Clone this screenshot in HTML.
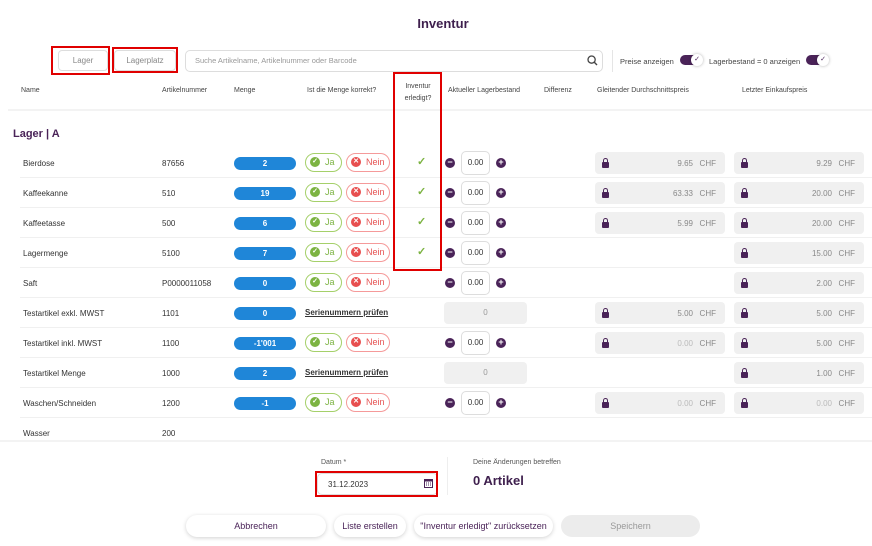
<!DOCTYPE html>
<html><head><meta charset="utf-8"><style>
*{box-sizing:border-box;margin:0;padding:0}
body{width:872px;height:546px;overflow:hidden;background:#fff;font-family:"Liberation Sans",sans-serif;color:#333;position:relative}
.a{position:absolute}
.t{font-size:7.5px;color:#444}
.h{font-size:7px;color:#444}
.row{position:absolute;left:0;width:872px;height:30px}
.row:after{content:"";position:absolute;left:20px;right:0;bottom:0;height:1px;background:#f0f0f0}
.row .nm{position:absolute;left:23px;top:11px;font-size:8px;color:#333}
.row .nr{position:absolute;left:162px;top:11px;font-size:8px;color:#333}
.pill{position:absolute;left:234px;top:9px;width:62px;height:13px;border-radius:7px;background:#1f86d8;color:#fff;font-size:8px;font-weight:bold;text-align:center;line-height:13px}
.ja,.ne{position:absolute;top:5px;height:19px;border-radius:10px;font-size:9px;line-height:17px;padding-left:19px}
.ja{left:305px;width:37px;border:1px solid #a5d06a;color:#7cb342}
.ne{left:346px;width:44px;border:1px solid #f59a9a;color:#e55353}
.ja:before,.ne:before{content:"";position:absolute;left:4px;top:3px;width:10px;height:10px;border-radius:50%}
.ja:before{background:#7cb342}.ne:before{background:#e84e4e}
.ja i,.ne i{position:absolute;left:4px;top:3px;width:10px;height:10px;color:#fff;font-style:normal;font-size:7px;line-height:10px;text-align:center;font-weight:bold}
.ck{position:absolute;left:417px;top:7px;color:#7cb342;font-size:11px;font-weight:bold}
.mi,.pl{position:absolute;top:10px;width:10px;height:10px;border-radius:50%;background:#4a2358;color:#fff;font-size:9px;line-height:9px;text-align:center;font-weight:bold}
.mi{left:445px}.pl{left:496px}
.in{position:absolute;left:461px;top:3px;width:29px;height:24px;border:1px solid #ddd;border-radius:5px;font-size:8px;text-align:center;line-height:22px;color:#333}
.pb{position:absolute;top:4px;width:130px;height:22px;background:#f0f0f0;border-radius:4px;font-size:8px;color:#888}
.pb b{position:absolute;left:7px;top:10px;width:7px;height:6px;background:#4a2358;border-radius:1px}
.pb b:before{content:"";position:absolute;left:1px;top:-4px;width:5px;height:5px;border:1px solid #4a2358;border-bottom:none;border-radius:3px 3px 0 0;box-sizing:border-box}
.pb span{position:absolute;right:32px;top:7px}
.pb em{position:absolute;right:9px;top:7px;font-style:normal}
.p1{left:595px}.p2{left:734px}
.lt span{color:#bbb}
.sn{position:absolute;left:305px;top:10px;font-size:8px;font-weight:bold;text-decoration:underline;color:#333}
.dis{position:absolute;left:444px;top:4px;width:83px;height:22px;background:#f0f0f0;border-radius:4px;font-size:8px;color:#999;text-align:center;line-height:22px}
.btn{position:absolute;top:515px;height:22px;border-radius:11px;background:#fff;box-shadow:0 1px 4px rgba(0,0,0,.18);font-size:9px;color:#4a2358;text-align:center;line-height:22px}
.red{position:absolute;border:2px solid #e00000}
</style></head><body>
<div class="a" style="left:0;top:16px;width:886px;text-align:center;font-size:13px;font-weight:bold;color:#3e1f4d">Inventur</div>

<div class="a" style="left:58px;top:50px;width:50px;height:21px;border:1px solid #ddd;border-radius:4px;font-size:8px;color:#888;text-align:center;line-height:19px">Lager</div>
<div class="a" style="left:114px;top:50px;width:62px;height:21px;border:1px solid #ddd;border-radius:4px;font-size:8px;color:#888;text-align:center;line-height:19px">Lagerplatz</div>
<div class="red" style="left:51px;top:46px;width:59px;height:29px"></div>
<div class="red" style="left:112px;top:47px;width:66px;height:26px"></div>
<div class="a" style="left:185px;top:50px;width:418px;height:22px;border:1px solid #ddd;border-radius:5px;font-size:7.5px;color:#999;line-height:20px;padding-left:9px">Suche Artikelname, Artikelnummer oder Barcode</div>
<svg class="a" style="left:587px;top:55px" width="11" height="11" viewBox="0 0 11 11"><circle cx="4.6" cy="4.6" r="3.6" fill="none" stroke="#444" stroke-width="1.3"/><path d="M7.3 7.3L10 10" stroke="#444" stroke-width="1.4"/></svg>
<div class="a" style="left:612px;top:50px;width:1px;height:22px;background:#e5e5e5"></div>
<div class="a t" style="left:620px;top:57px">Preise anzeigen</div>
<div class="a" style="left:680px;top:55px;width:20px;height:10px;border-radius:5px;background:#4a2358"></div>
<div class="a" style="left:691px;top:54px;width:12px;height:12px;border-radius:50%;background:#fff;box-shadow:0 0 3px rgba(0,0,0,.3);font-size:7px;text-align:center;line-height:12px;color:#4a2358">✓</div>
<div class="a t" style="left:709px;top:57px">Lagerbestand = 0 anzeigen</div>
<div class="a" style="left:806px;top:55px;width:20px;height:10px;border-radius:5px;background:#4a2358"></div>
<div class="a" style="left:817px;top:54px;width:12px;height:12px;border-radius:50%;background:#fff;box-shadow:0 0 3px rgba(0,0,0,.3);font-size:7px;text-align:center;line-height:12px;color:#4a2358">✓</div>

<div class="a h" style="left:21px;top:87px">Name</div>
<div class="a h" style="left:162px;top:87px">Artikelnummer</div>
<div class="a h" style="left:234px;top:87px">Menge</div>
<div class="a h" style="left:307px;top:87px">Ist die Menge korrekt?</div>
<div class="a h" style="left:400px;top:81px;width:36px;text-align:center;line-height:12px">Inventur erledigt?</div>
<div class="a h" style="left:448px;top:87px">Aktueller Lagerbestand</div>
<div class="a h" style="left:544px;top:87px">Differenz</div>
<div class="a h" style="left:597px;top:87px">Gleitender Durchschnittspreis</div>
<div class="a h" style="left:742px;top:87px">Letzter Einkaufspreis</div>
<div class="a" style="left:8px;top:109px;width:864px;height:2px;background:#f3f3f3"></div>
<div class="a" style="left:13px;top:128px;font-size:11px;font-weight:bold;color:#4a2358">Lager | A</div>

<div class="row" style="top:148px"><div class="nm">Bierdose</div><div class="nr">87656</div><div class="pill">2</div><div class="ja"><i>✓</i>Ja</div><div class="ne"><i>✕</i>Nein</div><div class="ck">✓</div><div class="mi">−</div><div class="in">0.00</div><div class="pl">+</div><div class="pb p1"><b></b><span>9.65</span><em>CHF</em></div><div class="pb p2"><b></b><span>9.29</span><em>CHF</em></div></div>
<div class="row" style="top:178px"><div class="nm">Kaffeekanne</div><div class="nr">510</div><div class="pill">19</div><div class="ja"><i>✓</i>Ja</div><div class="ne"><i>✕</i>Nein</div><div class="ck">✓</div><div class="mi">−</div><div class="in">0.00</div><div class="pl">+</div><div class="pb p1"><b></b><span>63.33</span><em>CHF</em></div><div class="pb p2"><b></b><span>20.00</span><em>CHF</em></div></div>
<div class="row" style="top:208px"><div class="nm">Kaffeetasse</div><div class="nr">500</div><div class="pill">6</div><div class="ja"><i>✓</i>Ja</div><div class="ne"><i>✕</i>Nein</div><div class="ck">✓</div><div class="mi">−</div><div class="in">0.00</div><div class="pl">+</div><div class="pb p1"><b></b><span>5.99</span><em>CHF</em></div><div class="pb p2"><b></b><span>20.00</span><em>CHF</em></div></div>
<div class="row" style="top:238px"><div class="nm">Lagermenge</div><div class="nr">5100</div><div class="pill">7</div><div class="ja"><i>✓</i>Ja</div><div class="ne"><i>✕</i>Nein</div><div class="ck">✓</div><div class="mi">−</div><div class="in">0.00</div><div class="pl">+</div><div class="pb p2"><b></b><span>15.00</span><em>CHF</em></div></div>
<div class="row" style="top:268px"><div class="nm">Saft</div><div class="nr">P0000011058</div><div class="pill">0</div><div class="ja"><i>✓</i>Ja</div><div class="ne"><i>✕</i>Nein</div><div class="mi">−</div><div class="in">0.00</div><div class="pl">+</div><div class="pb p2"><b></b><span>2.00</span><em>CHF</em></div></div>
<div class="row" style="top:298px"><div class="nm">Testartikel exkl. MWST</div><div class="nr">1101</div><div class="pill">0</div><div class="sn">Serienummern prüfen</div><div class="dis">0</div><div class="pb p1"><b></b><span>5.00</span><em>CHF</em></div><div class="pb p2"><b></b><span>5.00</span><em>CHF</em></div></div>
<div class="row" style="top:328px"><div class="nm">Testartikel inkl. MWST</div><div class="nr">1100</div><div class="pill">-1'001</div><div class="ja"><i>✓</i>Ja</div><div class="ne"><i>✕</i>Nein</div><div class="mi">−</div><div class="in">0.00</div><div class="pl">+</div><div class="pb p1 lt"><b></b><span>0.00</span><em>CHF</em></div><div class="pb p2"><b></b><span>5.00</span><em>CHF</em></div></div>
<div class="row" style="top:358px"><div class="nm">Testartikel Menge</div><div class="nr">1000</div><div class="pill">2</div><div class="sn">Serienummern prüfen</div><div class="dis">0</div><div class="pb p2"><b></b><span>1.00</span><em>CHF</em></div></div>
<div class="row" style="top:388px"><div class="nm">Waschen/Schneiden</div><div class="nr">1200</div><div class="pill">-1</div><div class="ja"><i>✓</i>Ja</div><div class="ne"><i>✕</i>Nein</div><div class="mi">−</div><div class="in">0.00</div><div class="pl">+</div><div class="pb p1 lt"><b></b><span>0.00</span><em>CHF</em></div><div class="pb p2 lt"><b></b><span>0.00</span><em>CHF</em></div></div>
<div class="row" style="top:418px"><div class="nm">Wasser</div><div class="nr">200</div></div>

<div class="a" style="left:0;top:440px;width:872px;height:106px;background:#fff;border-top:2px solid #f3f3f3"></div>
<div class="red" style="left:393px;top:72px;width:49px;height:199px"></div>

<div class="a h" style="left:321px;top:459px;color:#555">Datum *</div>
<div class="a" style="left:317px;top:473px;width:121px;height:22px;border:1px solid #ddd;border-radius:5px;font-size:8px;line-height:22px;padding-left:10px;color:#333">31.12.2023</div>
<svg class="a" style="left:424px;top:478px" width="9" height="10" viewBox="0 0 9 10"><rect x="0.5" y="1.5" width="8" height="8" fill="none" stroke="#4a2358"/><rect x="0.5" y="1.5" width="8" height="2" fill="#4a2358"/><path d="M2 5h1M4 5h1M6 5h1M2 7h1M4 7h1M6 7h1" stroke="#4a2358"/></svg>
<div class="red" style="left:315px;top:471px;width:123px;height:26px"></div>
<div class="a" style="left:447px;top:457px;width:1px;height:38px;background:#eee"></div>
<div class="a h" style="left:473px;top:459px;color:#555">Deine Änderungen betreffen</div>
<div class="a" style="left:473px;top:473px;font-size:13px;font-weight:bold;color:#3e1f4d">0 Artikel</div>

<div class="btn" style="left:186px;width:140px">Abbrechen</div>
<div class="btn" style="left:334px;width:72px">Liste erstellen</div>
<div class="btn" style="left:414px;width:139px">"Inventur erledigt" zurücksetzen</div>
<div class="btn" style="left:561px;width:139px;background:#ececec;box-shadow:none;color:#999">Speichern</div>
</body></html>
